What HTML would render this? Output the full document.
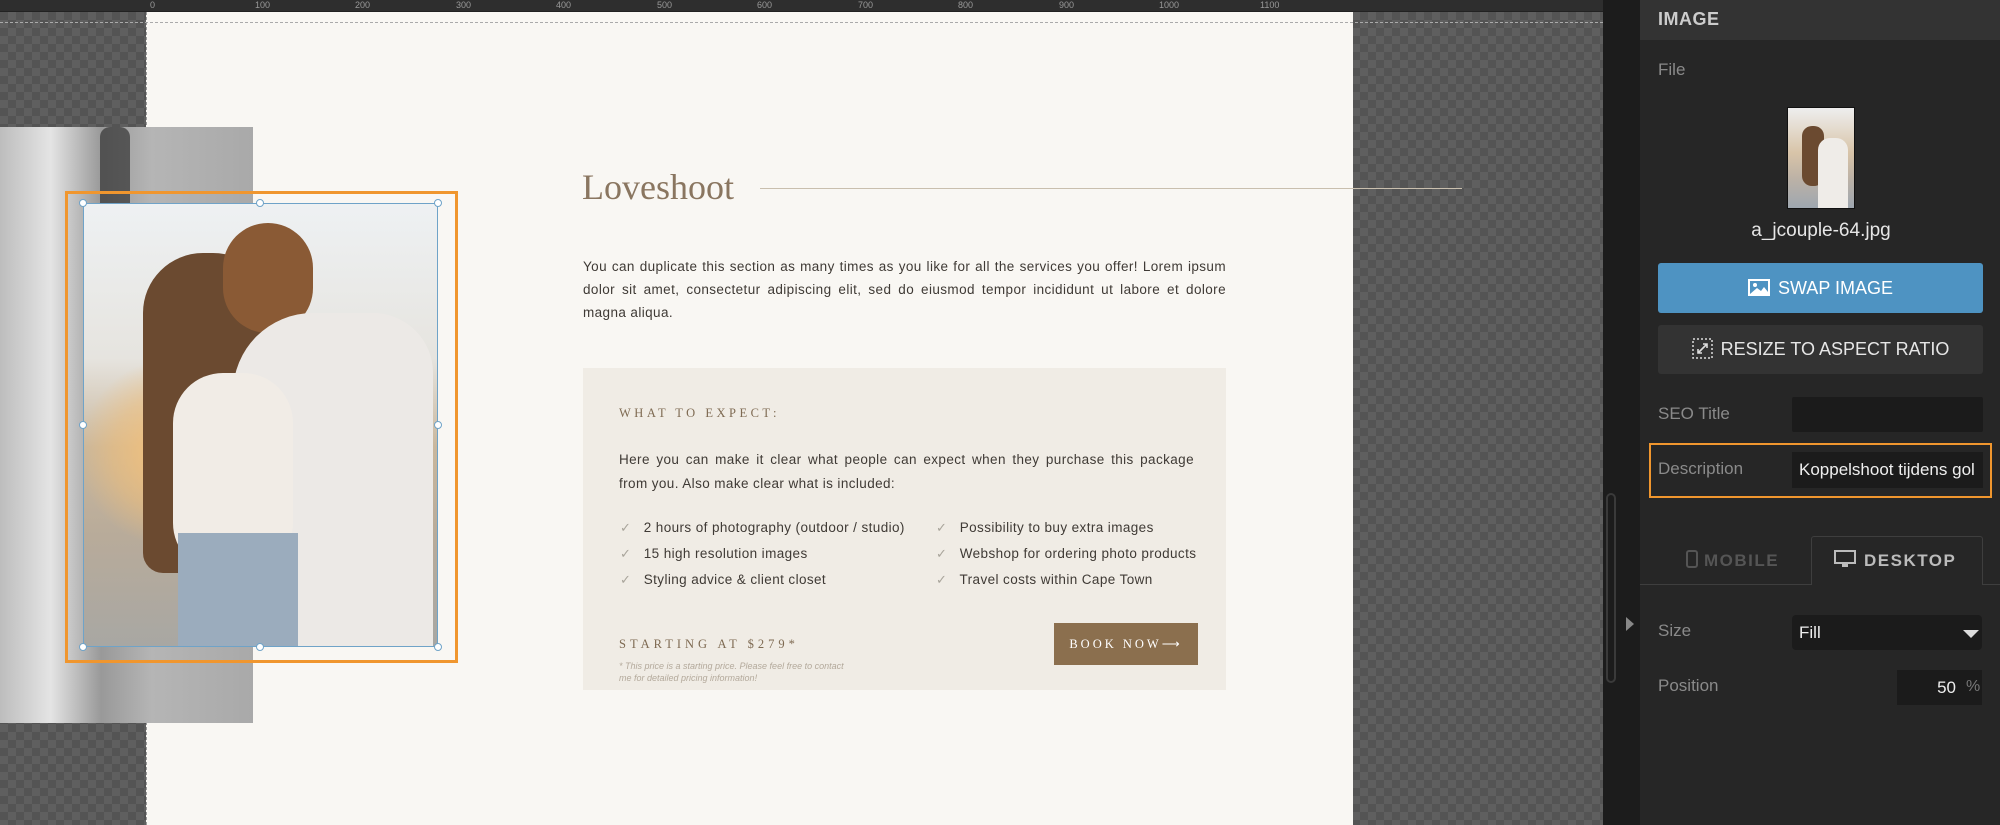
<!DOCTYPE html>
<html><head><meta charset="utf-8">
<style>
*{margin:0;padding:0;box-sizing:border-box}
body{width:2000px;height:825px;overflow:hidden;background:#555;font-family:"Liberation Sans",sans-serif;position:relative}
.abs{position:absolute}
.checker{background-color:#545454;background-image:linear-gradient(45deg,#5f5f5f 25%,transparent 25%,transparent 75%,#5f5f5f 75%),linear-gradient(45deg,#5f5f5f 25%,transparent 25%,transparent 75%,#5f5f5f 75%);background-size:16px 16px;background-position:0 0,8px 8px}
.ruler{left:0;top:0;width:1603px;height:12px;background:#2e2e2e;border-bottom:1px solid #222}
.ruler span{position:absolute;top:0;font-size:9px;color:#999}
.page{left:146px;top:12px;width:1207px;height:813px;background:#f9f7f3}
.t{color:#3f3a35;font-size:13.5px;letter-spacing:.4px}
.chk{color:#a9a59b;font-size:13px}
.panel{left:1640px;top:0;width:360px;height:825px;background:#262626}
.lbl{color:#8a8a8a;font-size:17px}
</style></head><body>
<div class="abs checker" style="left:0;top:12px;width:1603px;height:813px"></div>
<div class="abs ruler">
<span style="left:150px">0</span><span style="left:255px">100</span><span style="left:355px">200</span><span style="left:456px">300</span><span style="left:556px">400</span><span style="left:657px">500</span><span style="left:757px">600</span><span style="left:858px">700</span><span style="left:958px">800</span><span style="left:1059px">900</span><span style="left:1159px">1000</span><span style="left:1260px">1100</span>
</div>
<div class="abs page"></div>
<div class="abs" style="left:0;top:22px;width:1603px;border-top:1px dashed #aaa"></div>
<div class="abs" style="left:146px;top:12px;height:813px;border-left:1px dashed #999"></div>

<div class="abs" style="left:0;top:127px;width:253px;height:596px;background:linear-gradient(90deg,#bdbdbd 0%,#e4e4e4 20%,#999 40%,#b5b5b5 60%,#a9a9a9 100%)"></div>
<div class="abs" style="left:100px;top:127px;width:30px;height:100px;background:#333;border-radius:10px;opacity:.7"></div>

<div class="abs" style="left:83px;top:203px;width:355px;height:444px;overflow:hidden;background:linear-gradient(180deg,#eef1f3 0%,#e6e4df 35%,#c9b79d 55%,#b8ab9a 75%,#a8a7a3 100%)">
  <div class="abs" style="left:0;top:150px;width:180px;height:200px;background:radial-gradient(circle,#f6c27a 0%,rgba(240,190,120,.5) 45%,transparent 70%)"></div>
  <div class="abs" style="left:60px;top:50px;width:130px;height:320px;background:#6b4a30;border-radius:60px 60px 20px 20px"></div>
  <div class="abs" style="left:140px;top:20px;width:90px;height:110px;background:#8a5a35;border-radius:45px"></div>
  <div class="abs" style="left:150px;top:110px;width:200px;height:334px;background:#ece9e6;border-radius:80px 60px 0 0"></div>
  <div class="abs" style="left:90px;top:170px;width:120px;height:200px;background:#f1ece6;border-radius:50px"></div>
  <div class="abs" style="left:95px;top:330px;width:120px;height:114px;background:#9bacbd"></div>
</div>
<div class="abs" style="left:65px;top:191px;width:393px;height:472px;border:3px solid #f0962e"></div>
<div class="abs" style="left:83px;top:203px;width:355px;height:444px;border:1px solid #6fa3c8"></div>
<div class="abs" style="left:79px;top:199px;width:8px;height:8px;border:1.5px solid #6fa3c8;border-radius:50%;background:#fff"></div>
<div class="abs" style="left:256px;top:199px;width:8px;height:8px;border:1.5px solid #6fa3c8;border-radius:50%;background:#fff"></div>
<div class="abs" style="left:434px;top:199px;width:8px;height:8px;border:1.5px solid #6fa3c8;border-radius:50%;background:#fff"></div>
<div class="abs" style="left:79px;top:421px;width:8px;height:8px;border:1.5px solid #6fa3c8;border-radius:50%;background:#fff"></div>
<div class="abs" style="left:434px;top:421px;width:8px;height:8px;border:1.5px solid #6fa3c8;border-radius:50%;background:#fff"></div>
<div class="abs" style="left:79px;top:643px;width:8px;height:8px;border:1.5px solid #6fa3c8;border-radius:50%;background:#fff"></div>
<div class="abs" style="left:256px;top:643px;width:8px;height:8px;border:1.5px solid #6fa3c8;border-radius:50%;background:#fff"></div>
<div class="abs" style="left:434px;top:643px;width:8px;height:8px;border:1.5px solid #6fa3c8;border-radius:50%;background:#fff"></div>

<div class="abs" style="left:582px;top:166px;font-family:'Liberation Serif',serif;font-size:36px;color:#8a7660">Loveshoot</div>
<div class="abs" style="left:760px;top:188px;width:702px;height:1px;background:#c9bfae"></div>
<div class="abs t" style="left:583px;top:255px;width:643px;line-height:23px;text-align:justify">You can duplicate this section as many times as you like for all the services you offer! Lorem ipsum dolor sit amet, consectetur adipiscing elit, sed do eiusmod tempor incididunt ut labore et dolore magna aliqua.</div>

<div class="abs" style="left:583px;top:368px;width:643px;height:322px;background:#f0ece5"></div>
<div class="abs" style="left:619px;top:406px;font-size:12.5px;letter-spacing:3.5px;color:#7e6a52;font-family:'Liberation Serif',serif">WHAT TO EXPECT:</div>
<div class="abs t" style="left:619px;top:448px;width:575px;line-height:24px;text-align:justify">Here you can make it clear what people can expect when they purchase this package from you. Also make clear what is included:</div>
<div class="abs t" style="left:620px;top:515px;line-height:26px"><span class="chk">✓</span>&nbsp;&nbsp; 2 hours of photography (outdoor / studio)<br><span class="chk">✓</span>&nbsp;&nbsp; 15 high resolution images<br><span class="chk">✓</span>&nbsp;&nbsp; Styling advice &amp; client closet</div>
<div class="abs t" style="left:936px;top:515px;line-height:26px"><span class="chk">✓</span>&nbsp;&nbsp; Possibility to buy extra images<br><span class="chk">✓</span>&nbsp;&nbsp; Webshop for ordering photo products<br><span class="chk">✓</span>&nbsp;&nbsp; Travel costs within Cape Town</div>
<div class="abs" style="left:619px;top:637px;font-size:12.5px;letter-spacing:4px;color:#7e6a52;font-family:'Liberation Serif',serif">STARTING AT $279*</div>
<div class="abs" style="left:619px;top:660px;font-size:9px;font-style:italic;color:#b3a99b;line-height:12px">* This price is a starting price. Please feel free to contact<br>me for detailed pricing information!</div>
<div class="abs" style="left:1054px;top:623px;width:144px;height:42px;background:#8b6f4e;color:#fff;font-size:12.5px;letter-spacing:3px;line-height:42px;text-align:center;font-family:'Liberation Serif',serif">BOOK NOW⟶</div>

<div class="abs" style="left:1603px;top:0;width:37px;height:825px;background:#1c1c1c"></div>
<div class="abs" style="left:1606px;top:493px;width:10px;height:190px;border:2px solid #3a3a3a;border-radius:6px"></div>
<div class="abs" style="left:1626px;top:617px;width:0;height:0;border-left:8px solid #888;border-top:7px solid transparent;border-bottom:7px solid transparent"></div>

<div class="abs panel"></div>
<div class="abs" style="left:1640px;top:0;width:360px;height:40px;background:#333"></div>
<div class="abs" style="left:1658px;top:9px;font-size:18px;font-weight:bold;color:#ccc;letter-spacing:.5px">IMAGE</div>
<div class="abs lbl" style="left:1658px;top:60px">File</div>
<div class="abs" style="left:1787px;top:107px;width:68px;height:102px;border:1px solid #111;background:linear-gradient(180deg,#eee 0%,#d8c4a8 45%,#bdb2a6 70%,#9fa7b0 100%)">
  <div class="abs" style="left:14px;top:18px;width:22px;height:60px;background:#6b4a30;border-radius:10px"></div>
  <div class="abs" style="left:30px;top:30px;width:30px;height:70px;background:#efece8;border-radius:12px 12px 0 0"></div>
</div>
<div class="abs" style="left:1640px;top:220px;width:362px;text-align:center;font-size:19px;color:#e6e6e6">a_jcouple-64.jpg</div>
<div class="abs" style="left:1658px;top:263px;width:325px;height:50px;background:#4e93c2;border-radius:3px;color:#fff;font-size:18px;line-height:50px;text-align:center">
<svg width="22" height="17" viewBox="0 0 22 17" style="vertical-align:-2px;margin-right:8px"><rect x="1" y="1" width="20" height="15" fill="none" stroke="#fff" stroke-width="2"/><circle cx="7" cy="6" r="2" fill="#fff"/><path d="M2 15 L9 9 L13 12 L16 8 L20 13 L20 15Z" fill="#fff"/></svg>SWAP IMAGE</div>
<div class="abs" style="left:1658px;top:325px;width:325px;height:49px;background:#333;border-radius:3px;color:#e6e6e6;font-size:18px;line-height:49px;text-align:center">
<svg width="21" height="21" viewBox="0 0 21 21" style="vertical-align:-4px;margin-right:8px"><rect x="1" y="1" width="19" height="19" fill="none" stroke="#ddd" stroke-width="1.5" stroke-dasharray="2 2"/><path d="M6 15 L15 6 M11 6 H15 V10 M6 11 V15 H10" stroke="#ddd" stroke-width="1.6" fill="none"/></svg>RESIZE TO ASPECT RATIO</div>
<div class="abs lbl" style="left:1658px;top:404px">SEO Title</div>
<div class="abs" style="left:1792px;top:397px;width:191px;height:35px;background:#1b1b1b;border-radius:2px"></div>
<div class="abs" style="left:1649px;top:443px;width:343px;height:55px;border:2px solid #f0962e"></div>
<div class="abs lbl" style="left:1658px;top:459px">Description</div>
<div class="abs" style="left:1792px;top:452px;width:191px;height:36px;background:#1b1b1b;overflow:hidden;color:#eee;font-size:17px;line-height:36px;padding-left:7px;white-space:nowrap">Koppelshoot tijdens gol</div>
<div class="abs" style="left:1640px;top:584px;width:360px;height:1px;background:#3e3e3e"></div>
<div class="abs" style="left:1811px;top:536px;width:172px;height:49px;background:#262626;border:1px solid #3e3e3e;border-bottom:none;border-radius:3px 3px 0 0"></div>
<div class="abs" style="left:1686px;top:550px;font-size:17px;font-weight:bold;color:#555;letter-spacing:1.5px">
<svg width="12" height="18" viewBox="0 0 12 18" style="vertical-align:-2px;margin-right:6px"><rect x="1" y="1" width="10" height="16" rx="2" fill="none" stroke="#555" stroke-width="2"/></svg>MOBILE</div>
<div class="abs" style="left:1834px;top:550px;font-size:17px;font-weight:bold;color:#bbb;letter-spacing:1.5px">
<svg width="22" height="18" viewBox="0 0 22 18" style="vertical-align:-2px;margin-right:8px"><rect x="1" y="1" width="20" height="12" fill="none" stroke="#bbb" stroke-width="2"/><rect x="8" y="14" width="6" height="3" fill="#bbb"/></svg>DESKTOP</div>
<div class="abs lbl" style="left:1658px;top:621px">Size</div>
<div class="abs" style="left:1792px;top:615px;width:190px;height:35px;background:#1b1b1b;border-radius:4px;color:#eee;font-size:17px;line-height:35px;padding-left:7px">Fill</div>
<div class="abs" style="left:1963px;top:630px;width:0;height:0;border-top:8px solid #ddd;border-left:8px solid transparent;border-right:8px solid transparent"></div>
<div class="abs lbl" style="left:1658px;top:676px">Position</div>
<div class="abs" style="left:1897px;top:670px;width:85px;height:35px;background:#1b1b1b;color:#eee;font-size:17px;line-height:35px;text-align:right;padding-right:26px">50</div>
<div class="abs" style="left:1966px;top:678px;color:#777;font-size:16px">%</div>
</body></html>
